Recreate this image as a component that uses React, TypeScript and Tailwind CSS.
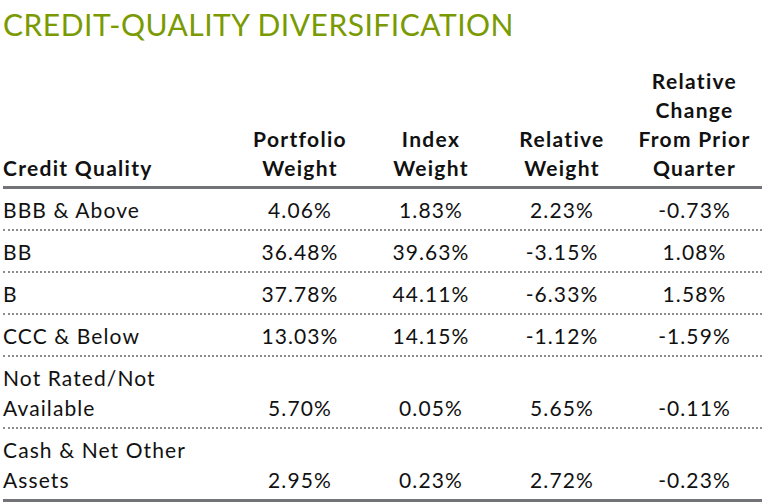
import React from "react";

const rows: { label: React.ReactNode; v: string[] }[] = [
  { label: "BBB & Above", v: ["4.06%", "1.83%", "2.23%", "-0.73%"] },
  { label: "BB", v: ["36.48%", "39.63%", "-3.15%", "1.08%"] },
  { label: "B", v: ["37.78%", "44.11%", "-6.33%", "1.58%"] },
  { label: "CCC & Below", v: ["13.03%", "14.15%", "-1.12%", "-1.59%"] },
  { label: <>Not Rated/Not<br />Available</>, v: ["5.70%", "0.05%", "5.65%", "-0.11%"] },
  { label: <>Cash &amp; Net Other<br />Assets</>, v: ["2.95%", "0.23%", "2.72%", "-0.23%"] },
];

const cols = "grid grid-cols-[232px_130px_132px_130px_135px]";

export default function App() {
  return (
    <div className="w-[771px] h-[502px] bg-white overflow-hidden" style={{ fontFamily: "Lato, 'Open Sans', sans-serif" }}>
      <div className="pl-[3px] pt-[4px] text-[30px] leading-[40px] text-[#7a9a01] tracking-[0.5px] whitespace-nowrap">
        CREDIT-QUALITY DIVERSIFICATION
      </div>
      <div className="ml-[3px] w-[759px] mt-[22px] text-[21px] tracking-[1.1px] text-[#111] whitespace-nowrap">
        <div className={`${cols} items-end font-bold tracking-[1.3px] leading-[29px] pb-[4px] border-b-[3px] border-[#727376]`}>
          <div>Credit Quality</div>
          <div className="text-center">Portfolio<br />Weight</div>
          <div className="text-center">Index<br />Weight</div>
          <div className="text-center">Relative<br />Weight</div>
          <div className="text-center">Relative<br />Change<br />From Prior<br />Quarter</div>
        </div>
        {rows.map((r, i) => (
          <div
            key={i}
            className={`${cols} items-end leading-[30px] pt-[6px] pb-[4px] ${i === rows.length - 1 ? "border-b-[3px] border-solid border-[#727376]" : "border-b-2 border-dotted border-[#8c8c8c]"}`}
          >
            <div>{r.label}</div>
            {r.v.map((x, j) => (
              <div key={j} className="text-center">{x}</div>
            ))}
          </div>
        ))}
      </div>
    </div>
  );
}
